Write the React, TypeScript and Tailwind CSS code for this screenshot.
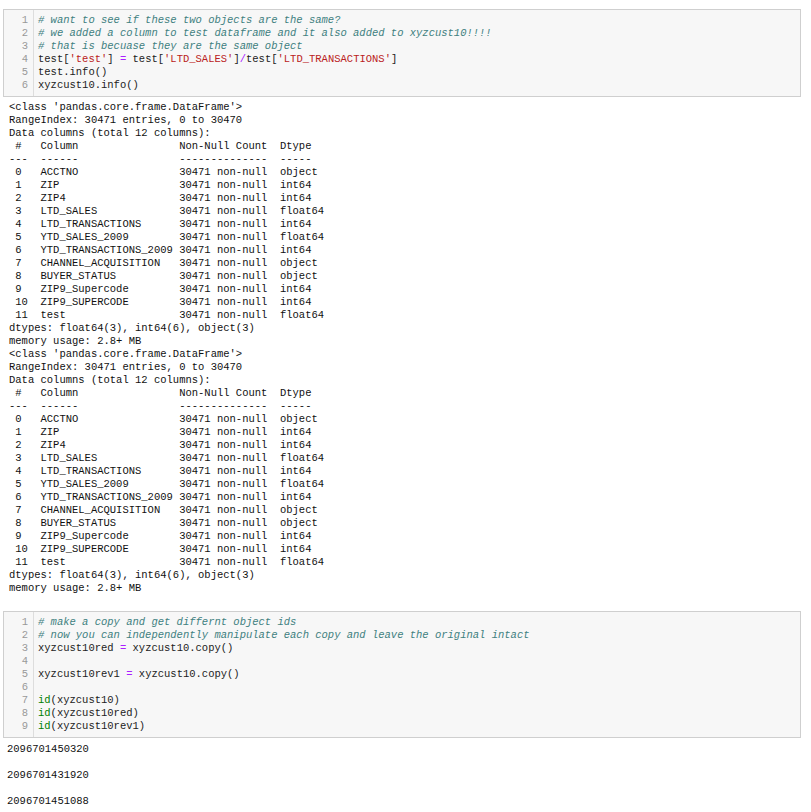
const mono = "font-[Liberation_Mono] text-[10.5px] leading-[13px]";

type Tok = [string, string?];

const C = "text-[#408080] italic";
const S = "text-[#BA2121]";
const O = "text-[#AA22FF]";
const B = "text-[#008000]";

const cell1: Tok[][] = [
  [["# want to see if these two objects are the same?", C]],
  [["# we added a column to test dataframe and it also added to xyzcust10!!!!", C]],
  [["# that is becuase they are the same object", C]],
  [["test["], ["'test'", S], ["] "], ["=", O], [" test["], ["'LTD_SALES'", S], ["]"], ["/", O], ["test["], ["'LTD_TRANSACTIONS'", S], ["]"]],
  [["test.info()"]],
  [["xyzcust10.info()"]],
];

const cell2: Tok[][] = [
  [["# make a copy and get differnt object ids", C]],
  [["# now you can independently manipulate each copy and leave the original intact", C]],
  [["xyzcust10red "], ["=", O], [" xyzcust10.copy()"]],
  [[""]],
  [["xyzcust10rev1 "], ["=", O], [" xyzcust10.copy()"]],
  [[""]],
  [["id", B], ["(xyzcust10)"]],
  [["id", B], ["(xyzcust10red)"]],
  [["id", B], ["(xyzcust10rev1)"]],
];

const info = `<class 'pandas.core.frame.DataFrame'>
RangeIndex: 30471 entries, 0 to 30470
Data columns (total 12 columns):
 #   Column                Non-Null Count  Dtype  
---  ------                --------------  -----  
 0   ACCTNO                30471 non-null  object 
 1   ZIP                   30471 non-null  int64  
 2   ZIP4                  30471 non-null  int64  
 3   LTD_SALES             30471 non-null  float64
 4   LTD_TRANSACTIONS      30471 non-null  int64  
 5   YTD_SALES_2009        30471 non-null  float64
 6   YTD_TRANSACTIONS_2009 30471 non-null  int64  
 7   CHANNEL_ACQUISITION   30471 non-null  object 
 8   BUYER_STATUS          30471 non-null  object 
 9   ZIP9_Supercode        30471 non-null  int64  
 10  ZIP9_SUPERCODE        30471 non-null  int64  
 11  test                  30471 non-null  float64
dtypes: float64(3), int64(6), object(3)
memory usage: 2.8+ MB`;

function Cell({ lines }: { lines: Tok[][] }) {
  return (
    <div className={`flex border border-[#cfcfcf] bg-[#f7f7f7] ml-[3px] mr-[10px] ${mono}`}>
      <div className="w-[30px] border-r border-[#ddd] py-[4px] pr-[5px] text-right text-[#999]">
        {lines.map((_, i) => (
          <div key={i}>{i + 1}</div>
        ))}
      </div>
      <div className="py-[4px] pl-[4px] text-[#222] whitespace-pre">
        {lines.map((l, i) => (
          <div key={i} className="h-[13px]">
            {l.map(([t, c], j) => (
              <span key={j} className={c}>{t}</span>
            ))}
          </div>
        ))}
      </div>
    </div>
  );
}

export default function App() {
  return (
    <div className="bg-white w-[811px] min-h-[812px] pt-[9px] text-black">
      <Cell lines={cell1} />
      <pre className={`${mono} pl-[9px] pt-[4px] text-[#111]`}>{info + "\n" + info}</pre>
      <div className="h-[16px]" />
      <Cell lines={cell2} />
      <pre className={`${mono} pl-[7px] pt-[5px] text-[#111]`}>{"2096701450320\n\n2096701431920\n\n2096701451088"}</pre>
    </div>
  );
}
